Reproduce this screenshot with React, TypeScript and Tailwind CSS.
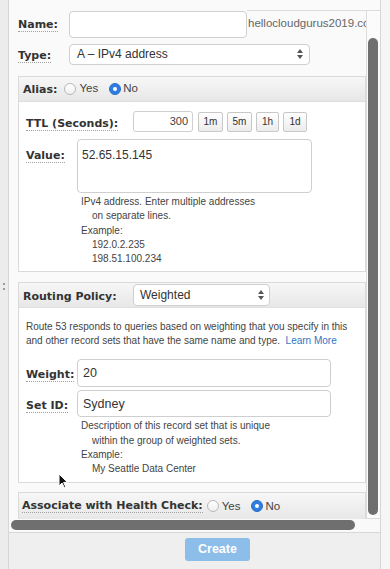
import React from "react";

const LBL = "font-['DejaVu_Sans',sans-serif] font-bold text-[11px] text-[#333] leading-[13px]";
const DOT = "border-b border-dotted border-[#a0a0a0]";

function Radio({ on }: { on?: boolean }) {
  return on ? (
    <span className="inline-flex w-[12px] h-[12px] rounded-full bg-[#2f7de1] items-center justify-center border border-[#2a6fcb]">
      <span className="w-[4px] h-[4px] rounded-full bg-white" />
    </span>
  ) : (
    <span className="inline-block w-[12px] h-[12px] rounded-full bg-linear-to-b from-white to-[#f0f0f0] border border-[#b9b9b9]" />
  );
}

function Arrows() {
  return (
    <svg width="6" height="10" viewBox="0 0 6 10">
      <path d="M3 0 L6 4 L0 4 Z" fill="#555" />
      <path d="M3 10 L6 6 L0 6 Z" fill="#555" />
    </svg>
  );
}

function Btn({ t, w }: { t: string; w: number }) {
  return (
    <span
      className="h-[20px] flex items-center justify-center rounded-[2px] border border-[#c8c8c8] bg-linear-to-b from-white to-[#ececec] text-[10px] text-[#333]"
      style={{ width: w }}
    >
      {t}
    </span>
  );
}

export default function App() {
  return (
    <div className="w-[390px] h-[569px] flex bg-[#f6f6f6] overflow-hidden relative font-['Liberation_Sans',Arial,sans-serif]">
      {/* left strip */}
      <div className="w-[8px] shrink-0 bg-[#ececec] flex flex-col items-center">
        <div className="mt-[283px] w-[2px] h-[7px] border-l-2 border-dotted border-[#9a9a9a]" />
      </div>
      {/* main panel */}
      <div className="w-[373px] shrink-0 border-l border-r border-[#d6d6d6] flex flex-col bg-[#fafafa]">
        <div className="flex h-[519px] shrink-0">
          {/* scroll content */}
          <div className="w-[357px] shrink-0 overflow-hidden pl-[9px] pt-[10px]">
            {/* Name */}
            <div className="flex items-start h-[27px] w-[400px]">
              <div className="w-[51px] h-[27px] flex items-center">
                <span className={`${LBL} ${DOT} mt-[2px]`}>Name:</span>
              </div>
              <div className="w-[178px] h-[27px] mt-[1px] rounded-[4px] border border-[#cfcfcf] bg-white" />
              <div className="w-[130px] h-[27px] border-t border-[#dcdcdc] flex items-center pl-[1px] text-[11.5px] text-[#666] whitespace-nowrap overflow-hidden">
                hellocloudgurus2019.com
              </div>
            </div>
            {/* Type */}
            <div className="flex items-center h-[20px] mt-[7px]">
              <div className="w-[51px]">
                <span className={`${LBL} ${DOT}`}>Type:</span>
              </div>
              <div className="w-[241px] h-[21px] rounded-[4px] border border-[#cfcfcf] bg-white flex items-center justify-between pl-[7px] pr-[6px] text-[12px] text-[#333]">
                <span>A – IPv4 address</span>
                <Arrows />
              </div>
            </div>
            {/* Alias box */}
            <div className="mt-[12px] w-[348px] border border-[#dadada] bg-white">
              <div className="h-[25px] bg-linear-to-b from-[#f7f7f7] to-[#e7e7e7] border-b border-[#dedede] flex items-center pl-[4px] text-[11.5px] text-[#444]">
                <span className={LBL}>Alias:</span>
                <span className="ml-[7px] flex items-center gap-[3px]">
                  <Radio /> Yes
                </span>
                <span className="ml-[11px] flex items-center gap-[2px]">
                  <Radio on /> No
                </span>
              </div>
              <div className="pl-[7px] pt-[9px] pb-[5px]">
                <div className="flex items-center h-[21px]">
                  <div className="w-[107px]">
                    <span className={`${LBL} ${DOT}`}>TTL (Seconds):</span>
                  </div>
                  <div className="w-[60px] h-[21px] rounded-[3px] border border-[#cfcfcf] bg-white flex items-center justify-end pr-[4px] text-[11px] text-[#444]">
                    300
                  </div>
                  <div className="ml-[5px] flex gap-[4px]">
                    <Btn t="1m" w={25} />
                    <Btn t="5m" w={25} />
                    <Btn t="1h" w={23} />
                    <Btn t="1d" w={24} />
                  </div>
                </div>
                <div className="flex mt-[7px]">
                  <div className="w-[51px] pt-[3px]">
                    <span className={`${LBL} ${DOT}`}>Value:</span>
                  </div>
                  <div className="w-[235px] h-[54px] rounded-[4px] border border-[#cfcfcf] bg-white pl-[4px] pt-[6px] text-[12px] text-[#333]">
                    52.65.15.145
                  </div>
                </div>
                <div className="ml-[55px] mt-[2px] text-[10px] leading-[14.3px] text-[#444]">
                  <div>IPv4 address. Enter multiple addresses</div>
                  <div className="pl-[11px]">on separate lines.</div>
                  <div>Example:</div>
                  <div className="pl-[11px]">192.0.2.235</div>
                  <div className="pl-[11px]">198.51.100.234</div>
                </div>
              </div>
            </div>
            {/* Routing box */}
            <div className="mt-[10px] w-[348px] border border-[#dadada] bg-white">
              <div className="h-[25px] bg-linear-to-b from-[#f7f7f7] to-[#e7e7e7] border-b border-[#dedede] flex items-center pl-[4px]">
                <div className="w-[110px]">
                  <span className={LBL}>Routing Policy:</span>
                </div>
                <div className="w-[137px] h-[22px] rounded-[4px] border border-[#cfcfcf] bg-white flex items-center justify-between pl-[6px] pr-[5px] text-[12px] text-[#333]">
                  <span>Weighted</span>
                  <Arrows />
                </div>
              </div>
              <div className="pl-[7px] pt-[12px] pb-[5px]">
                <div className="text-[10px] leading-[14px] text-[#444] whitespace-nowrap">
                  <div>Route 53 responds to queries based on weighting that you specify in this</div>
                  <div>
                    and other record sets that have the same name and type.&nbsp;{" "}
                    <span className="text-[#2c77c6]">Learn More</span>
                  </div>
                </div>
                <div className="flex items-center mt-[11px]">
                  <div className="w-[51px]">
                    <span className={`${LBL} ${DOT}`}>Weight:</span>
                  </div>
                  <div className="w-[254px] h-[28px] rounded-[4px] border border-[#cfcfcf] bg-white flex items-center pl-[5px] text-[12.5px] text-[#333]">
                    20
                  </div>
                </div>
                <div className="flex items-center mt-[3px]">
                  <div className="w-[51px]">
                    <span className={`${LBL} ${DOT}`}>Set ID:</span>
                  </div>
                  <div className="w-[254px] h-[27px] rounded-[4px] border border-[#cfcfcf] bg-white flex items-center pl-[5px] text-[12.5px] text-[#333]">
                    Sydney
                  </div>
                </div>
                <div className="ml-[55px] mt-[2px] text-[10px] leading-[14.3px] text-[#444]">
                  <div>Description of this record set that is unique</div>
                  <div className="pl-[11px]">within the group of weighted sets.</div>
                  <div>Example:</div>
                  <div className="pl-[11px]">My Seattle Data Center</div>
                </div>
              </div>
            </div>
            {/* Associate box */}
            <div className="mt-[9px] w-[348px] border border-[#dadada] bg-white">
              <div className="h-[27px] bg-linear-to-b from-[#f7f7f7] to-[#e7e7e7] flex items-center pl-[3px] text-[11.5px] text-[#444]">
                <span className={`${LBL} ${DOT}`}>Associate with Health Check:</span>
                <span className="ml-[4px] flex items-center gap-[3px]">
                  <Radio /> Yes
                </span>
                <span className="ml-[11px] flex items-center gap-[2px]">
                  <Radio on /> No
                </span>
              </div>
            </div>
          </div>
          {/* vertical scrollbar track */}
          <div className="w-[14px] shrink-0 flex flex-col">
            <div className="h-[10px]" />
            <div className="flex-1 border-l border-t border-b border-[#dcdcdc] bg-[#fbfbfb] pl-[1px]">
              <div className="mt-[27px] w-[10px] h-[477px] rounded-full bg-[#6f6f6f]" />
            </div>
          </div>
        </div>
        {/* horizontal scrollbar */}
        <div className="h-[13px] shrink-0 pl-[2px] pt-[1px] bg-[#f9f9f9]">
          <div className="w-[344px] h-[10px] rounded-full bg-[#6f6f6f]" />
        </div>
        {/* footer */}
        <div className="flex-1 border-t border-[#d8d8d8] bg-[#efefef] flex justify-center pt-[5px]">
          <div className="ml-[46px] w-[65px] h-[23px] rounded-[3px] bg-[#8dbde9] flex items-center justify-center text-white text-[12.5px] font-bold">
            Create
          </div>
        </div>
      </div>
      {/* mouse cursor */}
      <svg className="absolute left-[58px] top-[473px]" width="11" height="16" viewBox="0 0 11 16">
        <path d="M1 1 L1 13 L4 10 L6.5 15 L8 14.3 L5.6 9.4 L9.5 9.4 Z" fill="#111" stroke="#fff" strokeWidth="1" />
      </svg>
    </div>
  );
}
